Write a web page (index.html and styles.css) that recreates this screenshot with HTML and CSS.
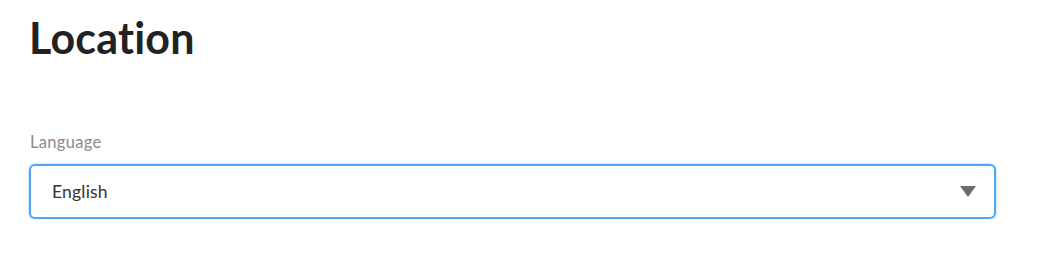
FILE: index.html
```html
<!DOCTYPE html>
<html lang="en">
<head>
<meta charset="utf-8">
<title>Location</title>
<link rel="stylesheet" href="styles.css">
</head>
<body>
<main class="page">
  <h1 class="title">Location</h1>
  <div class="field">
    <label class="label" for="lang">Language</label>
    <div class="select" id="lang">
      <span class="value">English</span>
      <svg class="caret" width="16" height="11" viewBox="0 0 16 11" aria-hidden="true"><path d="M0 0 H16 L8 11 Z" fill="#6b6b6b"/></svg>
    </div>
  </div>
</main>
</body>
</html>
```
FILE: styles.css
```css
html, body {
  margin: 0;
  background: #ffffff;
}
.page {
  padding: 12px 0 0 29px;
  width: 967px;
  font-family: "Lato", "Noto Sans", sans-serif;
}
.title {
  margin: 0;
  font-size: 43px;
  font-weight: 700;
  line-height: 52px;
  color: #222222;
  letter-spacing: 0.2px;
}
.field {
  margin-top: 68px;
  display: flex;
  flex-direction: column;
}
.label {
  font-size: 16.5px;
  line-height: 20px;
  color: #8a8a8a;
  margin-bottom: 12px;
  margin-left: 1px;
  letter-spacing: 0.3px;
}
.select {
  box-sizing: border-box;
  height: 55px;
  border: 2px solid #4ea6f2;
  border-radius: 6px;
  box-shadow: 0 0 3px rgba(78, 166, 242, 0.6);
  display: flex;
  align-items: center;
  justify-content: space-between;
  padding: 0 18px 0 21px;
}
.value {
  font-size: 17.5px;
  color: #333333;
  letter-spacing: 0.2px;
}
.caret {
  display: block;
}
```
